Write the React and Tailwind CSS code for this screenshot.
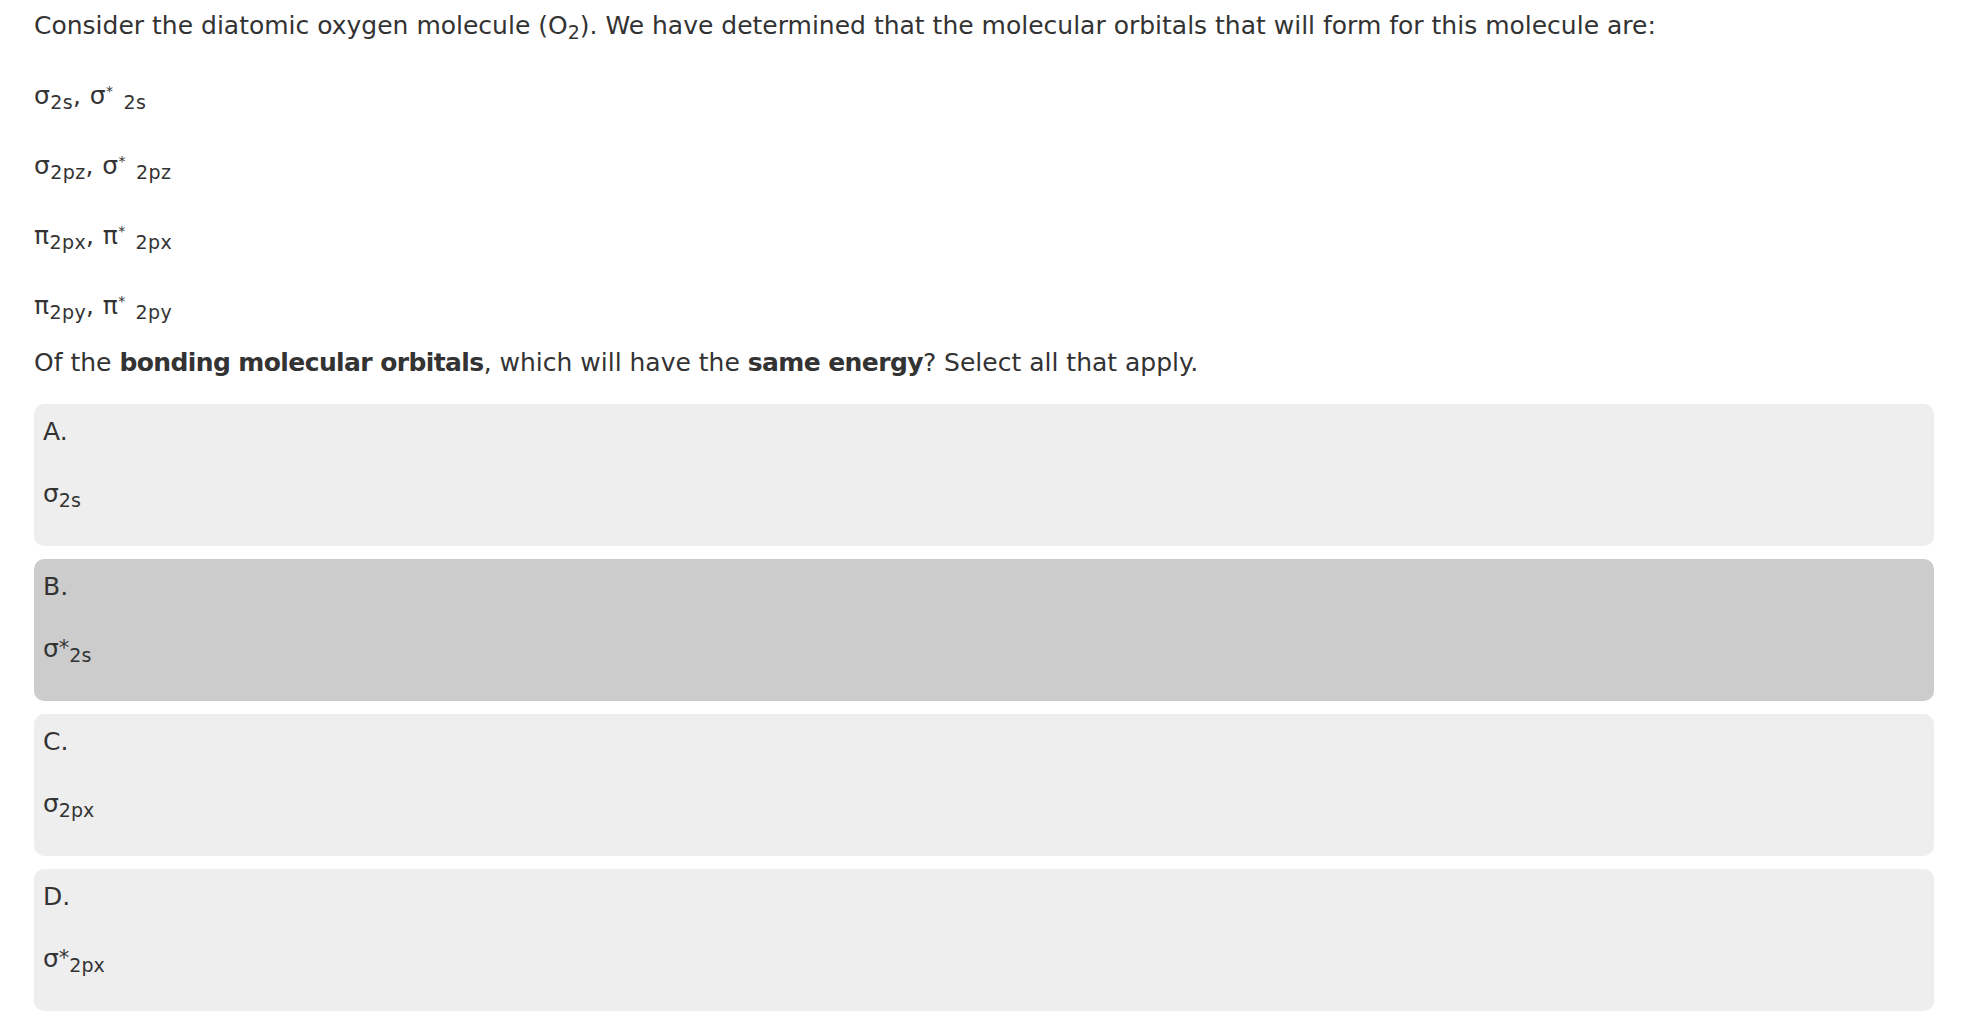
import React from 'react'

const font = { fontFamily: '"DejaVu Sans", "Liberation Sans", sans-serif' }

function Orb({ sym, star, sub }) {
  return (
    <span>
      {sym}
      {star && <sup className="relative -top-[8px] text-[14px]">*</sup>}
      <sub className={`text-[19px] ${star ? 'ml-[10px]' : ''}`}>{sub}</sub>
    </span>
  )
}

function Choice({ letter, children, selected }) {
  return (
    <div
      className={`h-[142px] rounded-[10px] pl-[9px] pt-[12px] ${
        selected ? 'bg-[#cccccc]' : 'bg-[#eeeeee]'
      }`}
    >
      <div className="leading-[32px]">{letter}</div>
      <div className="mt-[30px] leading-[32px]">{children}</div>
    </div>
  )
}

export default function App() {
  const pairs = [
    ['σ', '2s'],
    ['σ', '2pz'],
    ['π', '2px'],
    ['π', '2py'],
  ]

  return (
    <div className="min-h-screen bg-white text-[25px] text-[#333333]" style={font}>
      <div className="pl-[34px] pr-[54px] pt-[10px]">
        <p className="leading-[32px]">
          Consider the diatomic oxygen molecule (O<sub className="text-[19px]">2</sub>). We have determined that the molecular orbitals that will form for this molecule are:
        </p>

        {pairs.map(([s, sub]) => (
          <p key={sub} className="mt-[38px] leading-[32px] tracking-[0.4px]">
            <Orb sym={s} sub={sub} />, <Orb sym={s} star sub={sub} />
          </p>
        ))}

        <p className="mt-[25px] leading-[32px]">
          Of the <b className="font-bold tracking-[-0.6px]">bonding molecular orbitals</b>, which will have the <b className="font-bold tracking-[-0.6px]">same energy</b>? Select all that apply.
        </p>

        <div className="mt-[25px] flex flex-col gap-[13px]">
          <Choice letter="A.">
            σ<sub className="text-[19px]">2s</sub>
          </Choice>
          <Choice letter="B." selected>
            σ<sup className="relative -top-[2px] text-[21px]">*</sup><sub className="text-[19px]">2s</sub>
          </Choice>
          <Choice letter="C.">
            σ<sub className="text-[19px]">2px</sub>
          </Choice>
          <Choice letter="D.">
            σ<sup className="relative -top-[2px] text-[21px]">*</sup><sub className="text-[19px]">2px</sub>
          </Choice>
        </div>
      </div>
    </div>
  )
}
